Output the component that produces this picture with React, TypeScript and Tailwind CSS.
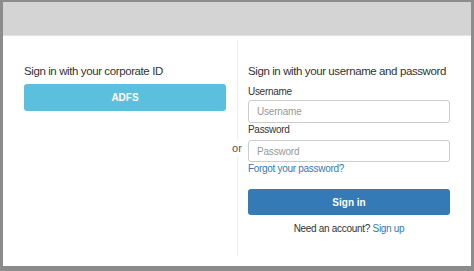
export default function App() {
  return (
    <div
      className="w-[474px] h-[271px] bg-[#8c8c8c] pt-[2px] pl-[3px] pr-[3px] pb-[5px] flex"
      style={{ fontFamily: '"Liberation Sans", Arial, sans-serif' }}
    >
      <div className="flex-1 flex flex-col bg-white">
        <div className="h-[34px] bg-[#d4d4d4] border-b border-[#e2e2e2]" />
        <div className="flex-1 flex">
          {/* corporate sign in */}
          <div className="w-[226px] pl-[21px] pt-[28px]">
            <p className="text-[11.5px] tracking-[-0.4px] text-[#333] leading-[14px]">Sign in with your corporate ID</p>
            <button className="mt-[6px] w-[202px] h-[27px] rounded-[3px] bg-[#5bc0de] text-white text-[10px] font-bold">
              ADFS
            </button>
          </div>

          {/* divider */}
          <div className="w-[16px] flex flex-col items-center pt-[4px] pb-[10px]">
            <div className="flex-1 w-px bg-[#eeeeee]" />
            <span className="text-[11px] text-[#555] leading-[12px] my-[2px]">or</span>
            <div className="flex-1 w-px bg-[#eeeeee]" />
          </div>

          {/* username sign in */}
          <div className="flex-1 pl-[3px] pr-[18px] pt-[28px]">
            <p className="text-[11.5px] tracking-[-0.4px] text-[#333] leading-[14px] whitespace-nowrap">
              Sign in with your username and password
            </p>
            <label className="block mt-[8px] text-[10px] tracking-[-0.3px] text-[#333] leading-[12px]">Username</label>
            <input
              placeholder="Username"
              className="mt-[2px] w-[202px] h-[23px] rounded-[3px] border border-[#ccc] px-[8px] text-[10px] tracking-[-0.2px] placeholder:text-[#999] outline-none"
            />
            <label className="block mt-[1px] text-[10px] tracking-[-0.3px] text-[#333] leading-[12px]">Password</label>
            <input
              type="password"
              placeholder="Password"
              className="mt-[4px] w-[202px] h-[22px] rounded-[3px] border border-[#ccc] px-[8px] text-[10px] tracking-[-0.2px] placeholder:text-[#999] outline-none"
            />
            <a className="block mt-[1px] text-[10px] tracking-[-0.3px] text-[#337ab7] leading-[12px]">Forgot your password?</a>
            <button className="mt-[14px] w-[202px] h-[26px] rounded-[3px] bg-[#337ab7] text-white text-[10px] font-bold">
              Sign in
            </button>
            <p className="mt-[8px] w-[202px] text-center text-[10px] tracking-[-0.3px] text-[#333] leading-[12px]">
              Need an account? <a className="text-[#337ab7]">Sign up</a>
            </p>
          </div>
        </div>
      </div>
    </div>
  )
}
